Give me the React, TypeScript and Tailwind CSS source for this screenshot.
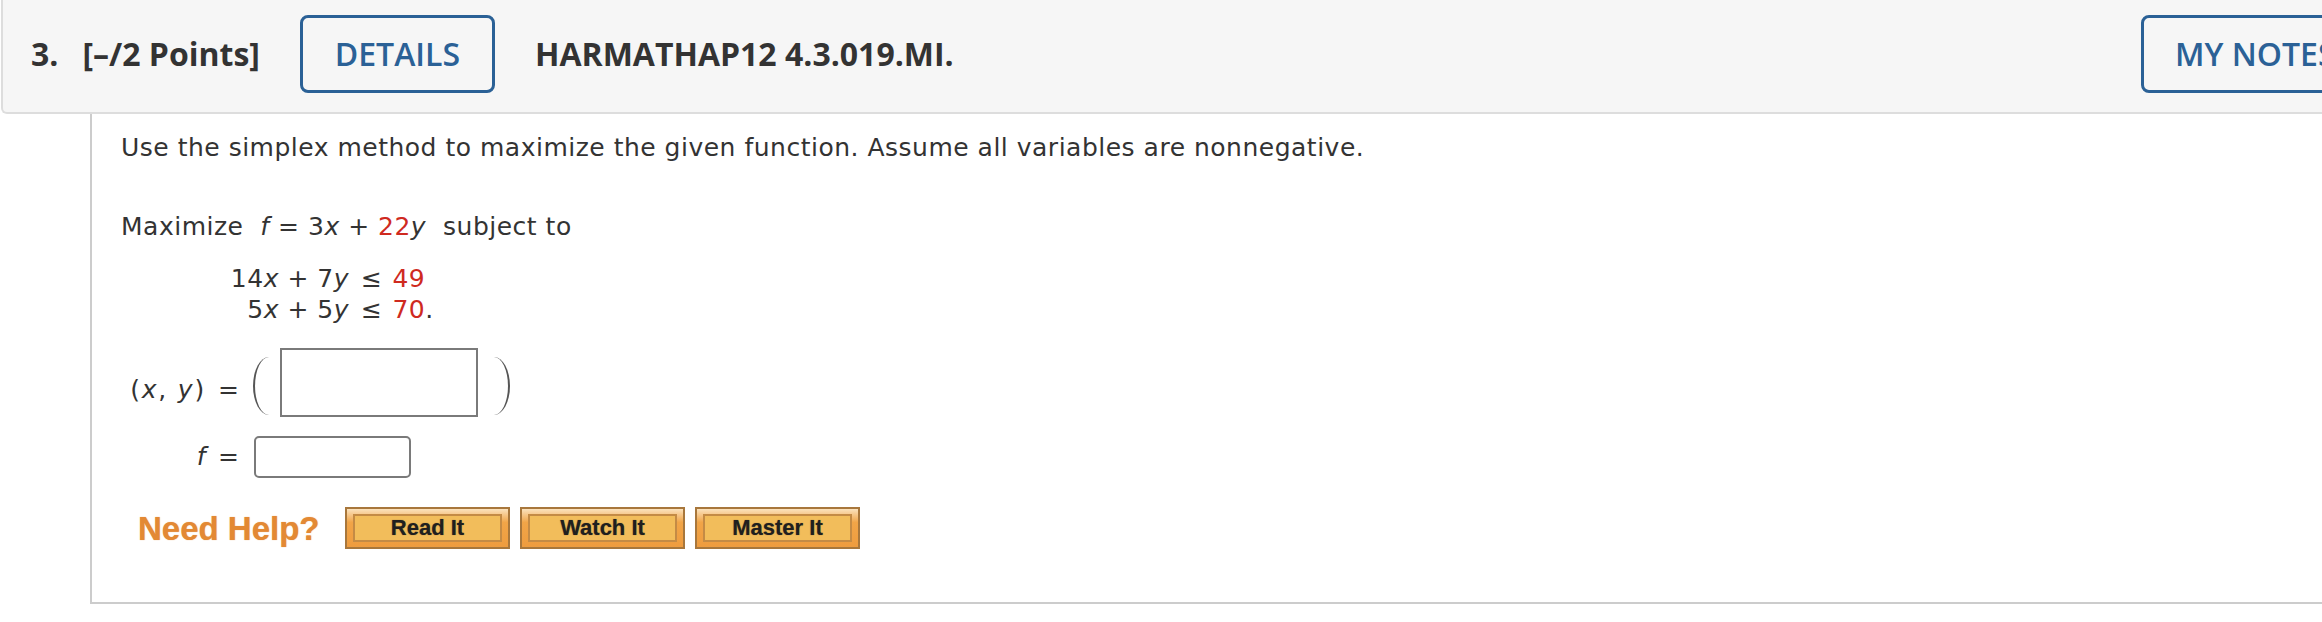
import type { ReactNode } from "react";

function Red({ children }: { children: ReactNode }) {
  return <span className="text-[#cf2a1f]">{children}</span>;
}

function HelpButton({ label }: { label: string }) {
  return (
    <div className="w-[165px] h-[42px] border-2 border-[#a8773c] px-[6px] py-[5px] bg-[linear-gradient(to_bottom,#fbe2bd_0%,#f1a548_35%,#ee9c3f_100%)]">
      <div className="h-full border-2 border-[#c48b45] bg-[#f2bd5b] flex items-center justify-center">
        <span className="font-['Liberation_Sans',Arial,sans-serif] font-bold text-[22px] leading-none tracking-normal text-[#1f1f1f] [text-shadow:0_0_1px_rgba(0,0,0,0.5)]">
          {label}
        </span>
      </div>
    </div>
  );
}

function ConstraintRow({ lhs, rhs }: { lhs: ReactNode; rhs: ReactNode }) {
  return (
    <div className="flex h-[31px] leading-[31px]">
      <span className="w-[138px] text-right whitespace-pre">{lhs}</span>
      <span className="ml-[12px]">≤</span>
      <span className="ml-[10px] whitespace-pre">{rhs}</span>
    </div>
  );
}

export default function App() {
  return (
    <div className="w-screen h-screen overflow-hidden bg-white">
      {/* question header */}
      <div className="ml-[1px] w-[2420px] h-[114px] bg-[#f6f6f6] border-l-2 border-b-2 border-[#dddddd] rounded-bl-[6px] pl-[28px] pr-[40px] pb-[4px] flex items-center font-['Open_Sans',sans-serif] text-[32px] text-[#333333]">
        <span className="font-bold">3.</span>
        <span className="font-bold ml-[24px]">[–/2 Points]</span>
        <div className="ml-[40px] w-[195px] h-[78px] border-[3px] border-[#2b6196] rounded-[8px] flex items-center justify-center">
          <span className="font-semibold text-[#2b6196]">DETAILS</span>
        </div>
        <span className="font-bold ml-[40px]">HARMATHAP12 4.3.019.MI.</span>
        <div className="ml-auto w-[240px] h-[78px] border-[3px] border-[#2b6196] rounded-[8px] flex items-center pl-[31px]">
          <span className="font-semibold text-[#2b6196] whitespace-nowrap">MY NOTES</span>
        </div>
      </div>

      {/* question body */}
      <div className="ml-[90px] w-[2300px] h-[490px] border-l-2 border-b-2 border-[#cccccc] pl-[29px] pt-[19px] font-['DejaVu_Sans',Verdana,sans-serif] text-[25px] leading-[30px] tracking-[0.5px] text-[#333333]">
        <p>Use the simplex method to maximize the given function. Assume all variables are nonnegative.</p>

        <p className="mt-[49px] whitespace-pre">
          Maximize  <i>f</i> = 3<i>x</i> + <Red>22</Red><i>y</i>  subject to
        </p>

        <div className="mt-[21px] ml-[90px]">
          <ConstraintRow lhs={<>14<i>x</i> + 7<i>y</i></>} rhs={<Red>49</Red>} />
          <ConstraintRow lhs={<>5<i>x</i> + 5<i>y</i></>} rhs={<><Red>70</Red>.</>} />
        </div>

        {/* (x, y) answer row */}
        <div className="mt-[23px] flex items-start h-[69px]">
          <span className="mt-[27px] w-[85px] text-right whitespace-pre tracking-[1.8px]">
            (<i>x</i>, <i>y</i>)
          </span>
          <span className="mt-[27px] ml-[12px] w-[21px] text-center">=</span>
          <div className="mt-[9px] ml-[14px] w-[16px] h-[58px] overflow-hidden">
            <div className="w-[32px] h-full rounded-[50%] border-l-2 border-[#555555]" />
          </div>
          <div className="ml-[11px] w-[198px] h-[69px] border-2 border-[#7a7a7a] bg-white" />
          <div className="mt-[9px] ml-[16px] w-[16px] h-[58px] overflow-hidden">
            <div className="-ml-[16px] w-[32px] h-full rounded-[50%] border-r-2 border-[#555555]" />
          </div>
        </div>

        {/* f answer row */}
        <div className="mt-[19px] flex items-center h-[42px]">
          <span className="w-[85px] text-right">
            <i>f</i>
          </span>
          <span className="ml-[12px] w-[21px] text-center">=</span>
          <div className="ml-[15px] w-[157px] h-[42px] border-2 border-[#7a7a7a] rounded-[5px] bg-white" />
        </div>

        {/* help row */}
        <div className="mt-[29px] flex items-center h-[42px]">
          <span className="ml-[17px] w-[184px] whitespace-nowrap font-['Liberation_Sans',Arial,sans-serif] font-bold text-[33px] leading-none tracking-normal text-[#e38934] [text-shadow:0_0_1px_rgba(227,137,52,0.8)]">
            Need Help?
          </span>
          <div className="ml-[23px] flex gap-[10px]">
            <HelpButton label="Read It" />
            <HelpButton label="Watch It" />
            <HelpButton label="Master It" />
          </div>
        </div>
      </div>
    </div>
  );
}
